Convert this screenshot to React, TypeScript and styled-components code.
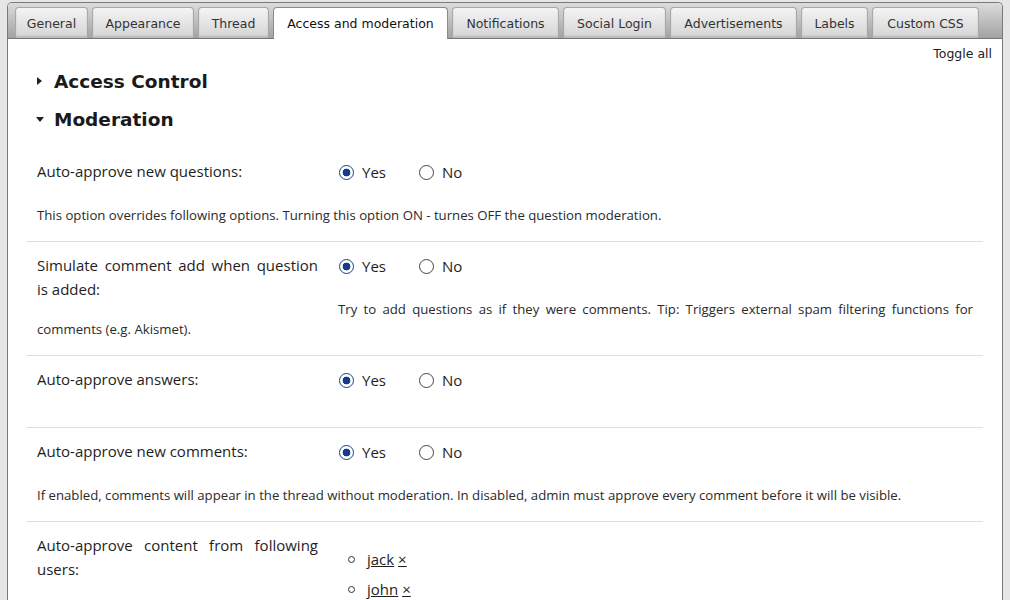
import styled, { createGlobalStyle } from 'styled-components';

const GlobalStyle = createGlobalStyle`
  html, body {
    margin: 0;
    padding: 0;
    background: #e6e6e6;
    font-family: "Open Sans", "Noto Sans", sans-serif;
    color: #1e1e1e;
  }
`;

const Page = styled.div`
  padding: 2px 7px 0 7px;
`;

const Panel = styled.div`
  border: 1px solid #7a7a7a;
  border-bottom: none;
  border-radius: 5px 5px 0 0;
  background: #fff;
  overflow: hidden;
  min-height: 620px;
`;

const TabBar = styled.div`
  display: flex;
  align-items: flex-end;
  gap: 4px;
  height: 35px;
  padding-left: 7px;
  background: linear-gradient(#dcdcdc, #a2a2a2);
  border-bottom: 1px solid #767676;
`;

const Tab = styled.div<{ $active?: boolean; $w: number }>`
  display: flex;
  align-items: center;
  justify-content: center;
  box-sizing: border-box;
  width: ${(p) => p.$w}px;
  height: ${(p) => (p.$active ? '32px' : '31px')};
  margin-bottom: ${(p) => (p.$active ? '-1px' : '0')};
  border: 1px solid ${(p) => (p.$active ? '#8a8a8a' : '#a8a8a8')};
  border-bottom: none;
  border-radius: 4px 4px 0 0;
  background: ${(p) => (p.$active ? '#fff' : 'linear-gradient(#f4f4f4, #d4d4d4)')};
  box-shadow: ${(p) => (p.$active ? 'none' : 'inset 0 -2px 2px rgba(0,0,0,0.12)')};
  font-family: "DejaVu Sans", Verdana, sans-serif;
  font-size: 12.5px;
  color: ${(p) => (p.$active ? '#111' : '#333')};
  white-space: nowrap;
`;

const Content = styled.div`
  padding: 0 10px 20px 10px;
`;

const ToggleAll = styled.div`
  text-align: right;
  font-family: "DejaVu Sans", Verdana, sans-serif;
  font-size: 12.5px;
  line-height: 16px;
  padding-top: 7px;
  color: #222;
`;

const SectionTitle = styled.h3`
  display: flex;
  align-items: center;
  margin: 0;
  height: 38px;
  padding-left: 18px;
  font-family: "DejaVu Sans", Verdana, sans-serif;
  font-weight: bold;
  font-size: 18.5px;
  color: #1a1a1a;
`;

const Arrow = styled.span<{ $open?: boolean }>`
  width: 0;
  height: 0;
  ${(p) =>
    p.$open
      ? `border-left: 4px solid transparent; border-right: 4px solid transparent; border-top: 5px solid #222; margin-right: 10px;`
      : `border-top: 4px solid transparent; border-bottom: 4px solid transparent; border-left: 5px solid #222; margin-left: 1px; margin-right: 12px;`}
`;

const Rows = styled.div`
  margin: 10px 9px 0 9px;
`;

const Row = styled.div<{ $last?: boolean }>`
  display: flow-root;
  padding: 11px 10px 16px 10px;
  border-bottom: ${(p) => (p.$last ? 'none' : '1px solid #dedede')};
`;

const Label = styled.div`
  float: left;
  width: 281px;
  margin-right: 20px;
  font-size: 15px;
  line-height: 24px;
  text-align: justify;
`;

const RadioGroup = styled.div<{ $alone?: boolean }>`
  display: flex;
  align-items: center;
  height: 26px;
  margin-bottom: ${(p) => (p.$alone ? 18 : 20)}px;
`;

const Option = styled.label`
  display: inline-flex;
  align-items: center;
  gap: 8px;
  margin-right: 32px;
  font-size: 15px;
`;

const Radio = styled.span<{ $checked?: boolean }>`
  box-sizing: border-box;
  width: 15px;
  height: 15px;
  margin-left: 1px;
  border-radius: 50%;
  border: 1px solid ${(p) => (p.$checked ? '#1b3f8a' : '#444')};
  background: ${(p) =>
    p.$checked ? 'radial-gradient(circle, #163c8c 0 3.6px, #fff 4.2px)' : '#fff'};
`;

const Description = styled.p`
  margin: 0;
  font-size: 13.2px;
  line-height: 20px;
  text-align: justify;
  color: #2a2a2a;
`;

const UserList = styled.ul`
  display: flow-root;
  list-style: none;
  margin: 0;
  padding: 11px 0 0 29px;
`;

const UserItem = styled.li`
  position: relative;
  font-size: 15px;
  line-height: 30px;
  &::before {
    content: '';
    position: absolute;
    left: -19px;
    top: 12px;
    width: 5px;
    height: 5px;
    border: 1.5px solid #333;
    border-radius: 50%;
  }
  a {
    color: #1e1e1e;
    text-decoration: underline;
  }
`;

const tabs = [
  { name: 'General', w: 73 },
  { name: 'Appearance', w: 102 },
  { name: 'Thread', w: 71 },
  { name: 'Access and moderation', w: 175, active: true },
  { name: 'Notifications', w: 107 },
  { name: 'Social Login', w: 103 },
  { name: 'Advertisements', w: 127 },
  { name: 'Labels', w: 67 },
  { name: 'Custom CSS', w: 107 },
];

const settings = [
  {
    label: 'Auto-approve new questions:',
    desc: 'This option overrides following options. Turning this option ON - turnes OFF the question moderation.',
  },
  {
    label: 'Simulate comment add when question is added:',
    desc: 'Try to add questions as if they were comments. Tip: Triggers external spam filtering functions for comments (e.g. Akismet).',
  },
  { label: 'Auto-approve answers:', desc: '' },
  {
    label: 'Auto-approve new comments:',
    desc: 'If enabled, comments will appear in the thread without moderation. In disabled, admin must approve every comment before it will be visible.',
  },
];

const YesNo = ({ alone }: { alone?: boolean }) => (
  <RadioGroup $alone={alone}>
    <Option>
      <Radio $checked />
      Yes
    </Option>
    <Option>
      <Radio />
      No
    </Option>
  </RadioGroup>
);

const App = () => {
  return (
    <>
      <GlobalStyle />
      <Page>
        <Panel>
          <TabBar>
            {tabs.map((t) => (
              <Tab key={t.name} $active={t.active} $w={t.w}>
                {t.name}
              </Tab>
            ))}
          </TabBar>
          <Content>
            <ToggleAll>Toggle all</ToggleAll>
            <SectionTitle>
              <Arrow />
              Access Control
            </SectionTitle>
            <SectionTitle>
              <Arrow $open />
              Moderation
            </SectionTitle>
            <Rows>
              {settings.map((s) => (
                <Row key={s.label}>
                  <Label>{s.label}</Label>
                  <YesNo alone={!s.desc} />
                  {s.desc && <Description>{s.desc}</Description>}
                </Row>
              ))}
              <Row $last>
                <Label>Auto-approve content from following users:</Label>
                <UserList>
                  <UserItem>
                    <a href="#">jack</a> <a href="#">×</a>
                  </UserItem>
                  <UserItem>
                    <a href="#">john</a> <a href="#">×</a>
                  </UserItem>
                </UserList>
              </Row>
            </Rows>
          </Content>
        </Panel>
      </Page>
    </>
  );
};

export default App;
